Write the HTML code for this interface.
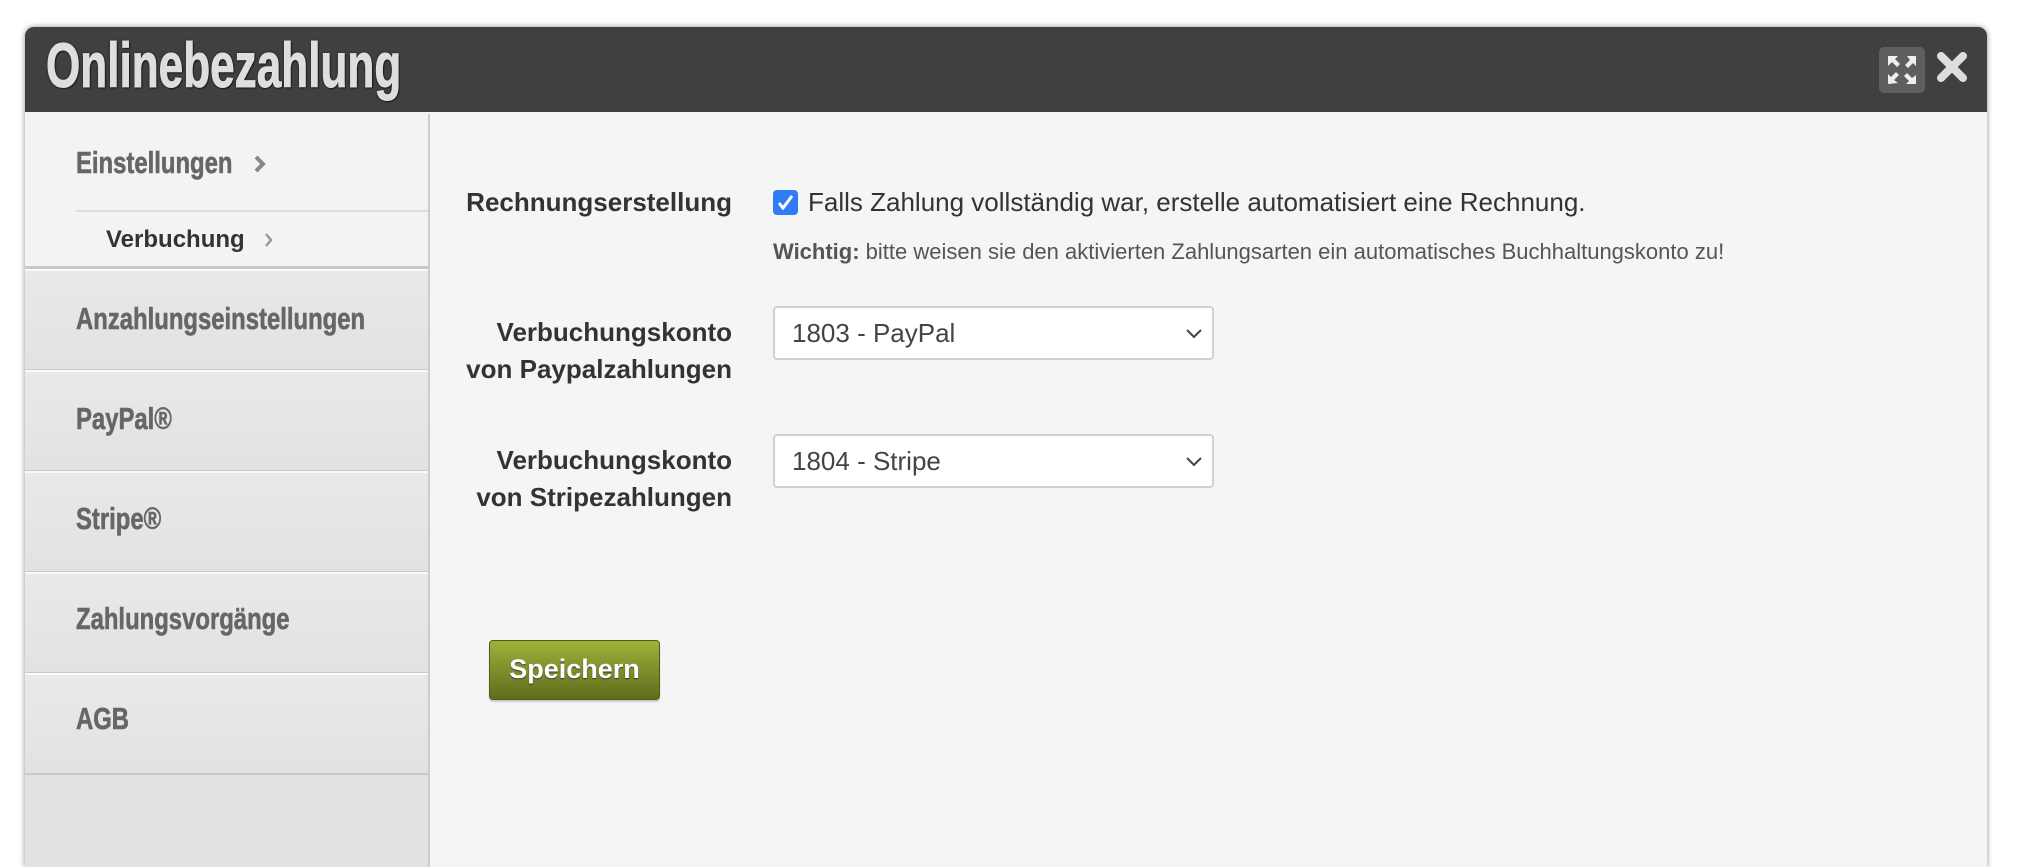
<!DOCTYPE html>
<html><head><meta charset="utf-8"><style>
body{margin:0;width:2020px;height:848px;background:#fff;overflow:hidden;font-family:"Liberation Sans",sans-serif;position:relative}
.win{position:absolute;left:25px;top:27px;width:1962px;height:840px;background:#f5f5f5;border-radius:9px 9px 0 0;box-shadow:0 0 6px rgba(0,0,0,.45);overflow:hidden}
.hdr{position:absolute;left:0;top:0;right:0;height:85px;background:#404040}
.title{position:absolute;left:21px;top:3px;font-weight:bold;font-size:63px;color:#dedede;transform:scaleX(.7);transform-origin:left;white-space:nowrap;-webkit-text-stroke:1px #dedede;text-shadow:0 0 3px #111,1px 1px 2px #000}
.side{position:absolute;left:0;top:87px;width:403px;bottom:0;background:#e2e2e2;border-right:2px solid #ccc}
.top{position:absolute;left:0;top:0;width:403px;height:152px;background:#f3f3f3;border-bottom:3px solid #c8c8c8}
.it{position:absolute;left:0;width:403px;height:98px;background:linear-gradient(#e9e9e9,#e2e2e2);border-top:2px solid #fafafa;border-bottom:2px solid #c9c9c9}
.lbl{position:absolute;left:51px;font-weight:bold;color:#666;font-size:31px;transform:scaleX(.77);transform-origin:left;white-space:nowrap;-webkit-text-stroke:.6px #666}
.f{position:absolute;font-size:26px;color:#333;white-space:nowrap}
.b{font-weight:bold;color:#333}
.sel{position:absolute;left:748px;width:441px;height:54px;background:#fff;border:2px solid #d0d0d0;border-radius:4px;box-sizing:border-box;font-size:26px;color:#444;padding-left:17px;line-height:50px}
.sel svg{position:absolute;right:10px;top:20px}
</style></head><body>
<div class="win">
 <div class="hdr">
  <div class="title">Onlinebezahlung</div>
  <div style="position:absolute;left:1854px;top:20px;width:46px;height:46px;background:#5e5e5e;border-radius:5px">
   <svg width="46" height="46" viewBox="0 0 46 46" fill="#eee"><path d="M9 9h10l-3 3 5 5-3 3-5-5-4 4z"/><path d="M37 9v10l-3-3-5 5-3-3 5-5-3-4z"/><path d="M9 37V27l3 3 5-5 3 3-5 5 4 3z"/><path d="M37 37H27l3-3-5-5 3-3 5 5 4-3z"/></svg>
  </div>
  <svg style="position:absolute;left:1909px;top:22px" width="36" height="36" viewBox="0 0 36 36"><path d="M7 7L29 29M29 7L7 29" stroke="#ddd" stroke-width="8" stroke-linecap="round"/></svg>
 </div>
 <div class="side">
  <div class="top">
   <div class="lbl" style="top:31px">Einstellungen</div>
   <svg style="position:absolute;left:228px;top:40px" width="14" height="20" viewBox="0 0 14 20"><path d="M3 3l7 7-7 7" stroke="#888" stroke-width="4" fill="none"/></svg>
   <div style="position:absolute;left:51px;right:0;top:96px;border-top:2px solid #ddd"></div>
   <div style="position:absolute;left:81px;top:112px;font-weight:bold;font-size:24px;color:#333">Verbuchung</div>
   <svg style="position:absolute;left:239px;top:118px" width="10" height="16" viewBox="0 0 10 16"><path d="M2 2l5 6-5 6" stroke="#999" stroke-width="2.5" fill="none"/></svg>
  </div>
  <div class="it" style="top:155px"><div class="lbl" style="top:30px">Anzahlungseinstellungen</div></div>
  <div class="it" style="top:256px"><div class="lbl" style="top:29px">PayPal®</div></div>
  <div class="it" style="top:357px"><div class="lbl" style="top:28px">Stripe®</div></div>
  <div class="it" style="top:458px"><div class="lbl" style="top:27px">Zahlungsvorgänge</div></div>
  <div class="it" style="top:559px"><div class="lbl" style="top:26px">AGB</div></div>
 </div>
 <div class="f b" style="right:1255px;top:160px">Rechnungserstellung</div>
 <div style="position:absolute;left:748px;top:163px;width:25px;height:25px;background:#2f7cf6;border-radius:4px">
  <svg width="25" height="25" viewBox="0 0 25 25"><path d="M6 13l4 5 9-12" stroke="#fff" stroke-width="3" fill="none"/></svg></div>
 <div class="f" style="left:783px;top:160px">Falls Zahlung vollständig war, erstelle automatisiert eine Rechnung.</div>
 <div class="f" style="left:748px;top:212px;font-size:22px;color:#555"><b>Wichtig:</b> bitte weisen sie den aktivierten Zahlungsarten ein automatisches Buchhaltungskonto zu!</div>
 <div class="f b" style="right:1255px;top:287px;text-align:right;line-height:37px">Verbuchungskonto<br>von Paypalzahlungen</div>
 <div class="sel" style="top:279px">1803 - PayPal<svg width="16" height="12"><path d="M1 2l7 7 7-7" stroke="#444" stroke-width="2" fill="none"/></svg></div>
 <div class="f b" style="right:1255px;top:415px;text-align:right;line-height:37px">Verbuchungskonto<br>von Stripezahlungen</div>
 <div class="sel" style="top:407px">1804 - Stripe<svg width="16" height="12"><path d="M1 2l7 7 7-7" stroke="#444" stroke-width="2" fill="none"/></svg></div>
 <div style="position:absolute;left:464px;top:613px;width:171px;height:60px;box-sizing:border-box;border:1px solid #4d5c16;border-radius:4px;background:linear-gradient(#a0b13a,#5d6d1d);box-shadow:0 2px 1px #ccc;color:#fff;font-weight:bold;font-size:27px;text-align:center;line-height:56px;text-shadow:0 1px 1px #333">Speichern</div>
</div>
</body></html>
